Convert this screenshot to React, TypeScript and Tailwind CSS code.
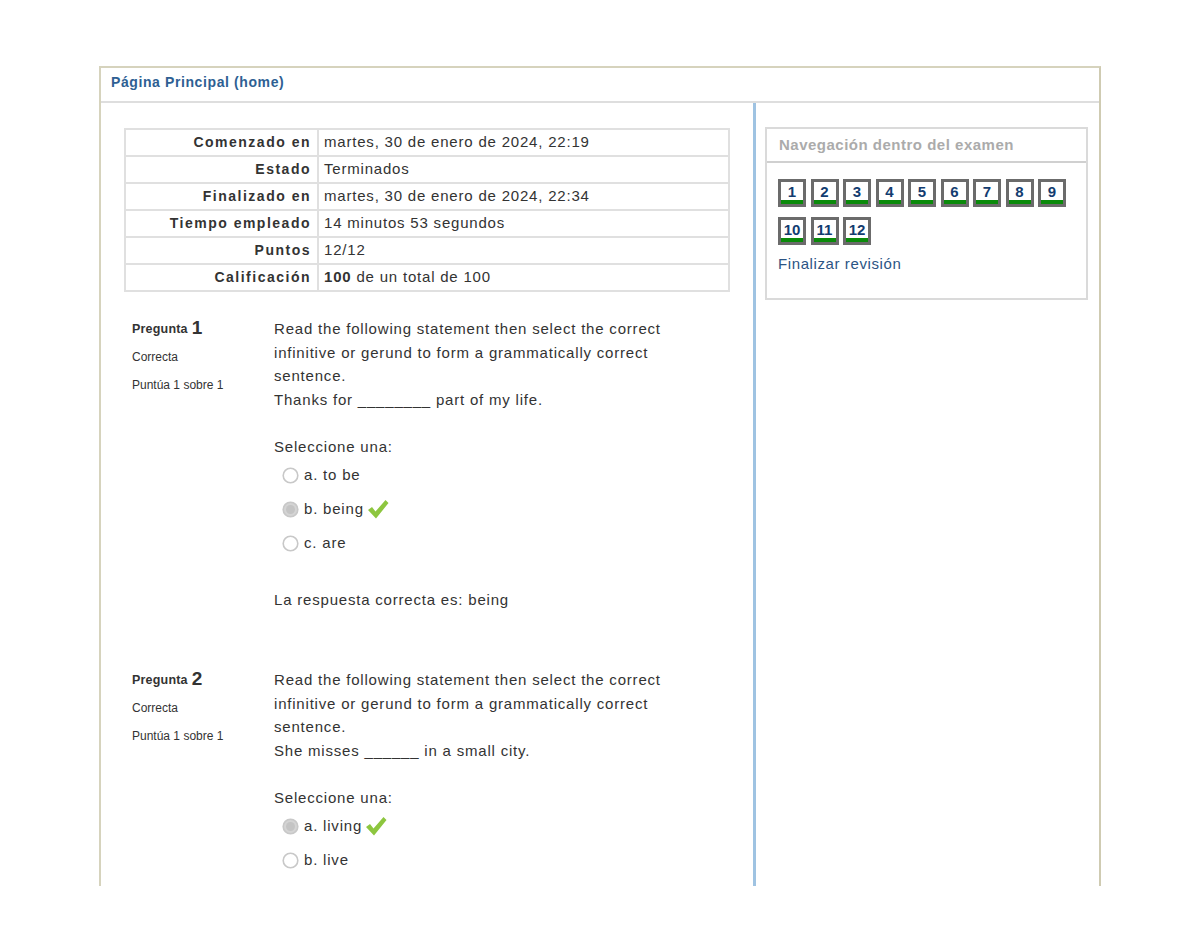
const summary = [
  { label: "Comenzado en", value: "martes, 30 de enero de 2024, 22:19" },
  { label: "Estado", value: "Terminados" },
  { label: "Finalizado en", value: "martes, 30 de enero de 2024, 22:34" },
  { label: "Tiempo empleado", value: "14 minutos 53 segundos" },
  { label: "Puntos", value: "12/12" },
];

const questions = [
  {
    n: 1,
    text: "Read the following statement then select the correct infinitive or gerund to form a grammatically correct sentence.",
    sentence: "Thanks for ________ part of my life.",
    options: [
      { label: "a. to be", checked: false },
      { label: "b. being", checked: true },
      { label: "c. are", checked: false },
    ],
    answer: "being",
  },
  {
    n: 2,
    text: "Read the following statement then select the correct infinitive or gerund to form a grammatically correct sentence.",
    sentence: "She misses ______ in a small city.",
    options: [
      { label: "a. living", checked: true },
      { label: "b. live", checked: false },
    ],
    answer: "living",
  },
];

function Radio({ checked }: { checked: boolean }) {
  return (
    <svg width="17" height="17" viewBox="0 0 17 17" className="shrink-0">
      <circle cx="8.5" cy="8.5" r="7.3" fill={checked ? "#d4d4d4" : "#fff"} stroke="#c8c8c8" strokeWidth="1.6" />
      {checked && <circle cx="8.5" cy="8.5" r="4.5" fill="#c4c4c4" />}
    </svg>
  );
}

function Check() {
  return (
    <svg width="22" height="20" viewBox="0 0 22 20" className="ml-[3px]">
      <path d="M1 11 L5 8 L8.5 12.5 L18.5 1 L21.5 4 L9 19.5 Z" fill="#8dc63f" />
    </svg>
  );
}

function Question({ q }: { q: (typeof questions)[number] }) {
  return (
    <div className="flex">
      <div className="w-[149px] pl-[7px] text-[12px] text-[#333] shrink-0">
        <div className="h-[22px] flex items-end">
          <span className="font-bold text-[12.5px] tracking-[0.2px]">Pregunta</span>
          <span className="ml-[4px] text-[19px] font-bold leading-[22px]">{q.n}</span>
        </div>
        <div className="mt-[9px]">Correcta</div>
        <div className="mt-[10px]">Puntúa 1 sobre 1</div>
      </div>
      <div className="w-[400px] text-[15px] leading-[23.5px] text-[#333] tracking-[0.8px]">
        <p>{q.text}</p>
        <p>{q.sentence}</p>
        <p className="mt-[24px]">Seleccione una:</p>
        <div className="mt-[5px] flex flex-col gap-[11px]">
          {q.options.map((o) => (
            <div key={o.label} className="flex items-center h-[23px] pl-[8px]">
              <Radio checked={o.checked} />
              <span className="ml-[5px]">{o.label}</span>
              {o.checked && <Check />}
            </div>
          ))}
        </div>
        {q.n === 1 && <p className="mt-[33px]">La respuesta correcta es: {q.answer}</p>}
      </div>
    </div>
  );
}

function NavButton({ n }: { n: number }) {
  return (
    <div className="w-[28px] h-[28px] border-[3px] border-[#6b6b6b] bg-white flex flex-col">
      <div className="flex-1 flex items-center justify-center text-[15px] font-bold text-[#123c70] leading-none">{n}</div>
      <div className="h-[4px] bg-[#0a8a0a]" />
    </div>
  );
}

export default function App() {
  return (
    <div className="w-[1200px] h-[927px] bg-white" style={{ fontFamily: '"Liberation Sans", Arial, sans-serif' }}>
      <div className="pt-[66px] pl-[99px]">
        <div className="w-[1002px] border-t-2 border-l-2 border-r-2 border-[#d6d3bd] border-r-[#cfcbb2]">
          {/* Header */}
          <div className="h-[35px] border-b-2 border-[#dedede] flex items-center px-[10px] pb-[4px]">
            <span className="text-[14px] font-bold text-[#2e5f93] tracking-[0.6px]">Página Principal (home)</span>
          </div>

          <div className="flex h-[783px] overflow-hidden">
            {/* Main */}
            <div className="w-[652px] shrink-0 pl-[23px] pt-[25px]">
              <table className="w-[606px] border-collapse border-2 border-[#e0e0e0] text-[15px] text-[#333] tracking-[0.8px]">
                <tbody>
                  {summary.map((r) => (
                    <tr key={r.label} className="h-[27px]">
                      <td className="w-[193px] border-2 border-[#e0e0e0] text-right pr-[6px] font-bold text-[14px] tracking-[1.5px]">{r.label}</td>
                      <td className="border-2 border-[#e0e0e0] pl-[5px]">{r.value}</td>
                    </tr>
                  ))}
                  <tr className="h-[27px]">
                    <td className="w-[193px] border-2 border-[#e0e0e0] text-right pr-[6px] font-bold text-[14px] tracking-[1.5px]">Calificación</td>
                    <td className="border-2 border-[#e0e0e0] pl-[5px]">
                      <span className="font-bold">100</span> de un total de 100
                    </td>
                  </tr>
                </tbody>
              </table>

              <div className="mt-[25px] pl-[1px]">
                <Question q={questions[0]} />
              </div>
              <div className="mt-[57px] pl-[1px]">
                <Question q={questions[1]} />
              </div>
            </div>

            {/* Divider */}
            <div className="w-[3px] shrink-0 bg-[#9fc3e2]" />

            {/* Sidebar */}
            <div className="flex-1 pl-[9px] pr-[11px] pt-[24px]">
              <div className="border-2 border-[#dadada]">
                <div className="h-[34px] border-b-2 border-[#d0d0d0] flex items-center px-[12px]">
                  <span className="text-[15px] font-bold text-[#ababab] tracking-[0.5px]">Navegación dentro del examen</span>
                </div>
                <div className="px-[11px] pt-[16px] pb-[22px]">
                  <div className="flex flex-wrap gap-x-[4.5px] gap-y-[10px] w-[290px]">
                    {Array.from({ length: 12 }, (_, i) => (
                      <NavButton key={i} n={i + 1} />
                    ))}
                  </div>
                  <a className="block mt-[8px] text-[15px] text-[#2b5484] tracking-[0.6px]">Finalizar revisión</a>
                </div>
              </div>
            </div>
          </div>
        </div>
      </div>
    </div>
  );
}
